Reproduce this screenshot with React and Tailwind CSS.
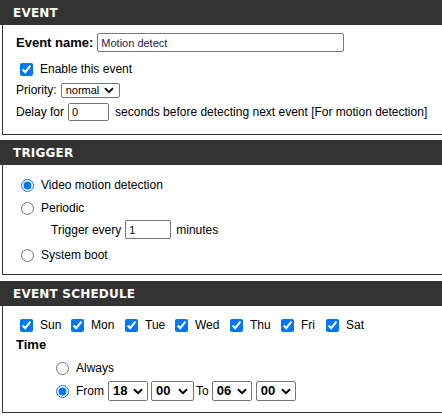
import { useState } from "react";

const Chevron = ({ bold }) => (
  <svg width="10" height="7" viewBox="0 0 10 7" className="shrink-0">
    <path
      d="M1 1.2 L5 5.2 L9 1.2"
      fill="none"
      stroke="#000"
      strokeWidth={bold ? 2 : 1.8}
    />
  </svg>
);

const FakeSelect = ({ value, className, bold }) => (
  <div
    className={`flex items-center justify-between bg-white border border-[#767676] rounded-[2px] ${className} ${
      bold ? "font-bold text-[13px]" : "text-[11px]"
    }`}
  >
    <span>{value}</span>
    <Chevron bold={bold} />
  </div>
);

const Header = ({ title }) => (
  <div className="h-[25px] bg-[#333333] flex items-center px-[13px] text-white font-['DejaVu_Sans',sans-serif] font-bold text-[12px] tracking-[0.2px]">
    {title}
  </div>
);

const Section = ({ title, children, className }) => (
  <div>
    <Header title={title} />
    <div className={`ml-[2px] border-l border-b border-[#333333] ${className}`}>
      {children}
    </div>
  </div>
);

const Radio = ({ name, checked, label }) => (
  <label className="flex items-center h-[18px]">
    <input
      type="radio"
      name={name}
      defaultChecked={checked}
      className="w-[13px] h-[13px] m-0"
    />
    <span className="ml-[7px]">{label}</span>
  </label>
);

const days = [
  { d: "Sun", w: "w-[51px]" },
  { d: "Mon", w: "w-[54px]" },
  { d: "Tue", w: "w-[50px]" },
  { d: "Wed", w: "w-[55px]" },
  { d: "Thu", w: "w-[51px]" },
  { d: "Fri", w: "w-[45px]" },
  { d: "Sat", w: "w-[40px]" },
];

export default function App() {
  const [name, setName] = useState("Motion detect");
  const [delay, setDelay] = useState("0");
  const [every, setEvery] = useState("1");

  return (
    <div className="w-[442px] h-[419px] overflow-hidden bg-white text-black text-[12px] font-['Liberation_Sans',Arial,sans-serif]">
      {/* Event */}
      <Section title="EVENT" className="pl-[13px] pt-[7px] pb-[12px] flex flex-col">
        <div className="flex items-center h-[21px]">
          <span className="font-bold text-[13px]">Event name:</span>
          <input
            value={name}
            onChange={(e) => setName(e.target.value)}
            className="ml-[4px] w-[247px] h-[19px] border border-[#767676] rounded-[2px] px-[3px] text-[11px] text-[#1a1a4a]"
          />
        </div>
        <label className="flex items-center h-[18px] mt-[7px] pl-[4px]">
          <input type="checkbox" defaultChecked className="w-[13px] h-[13px] m-0" />
          <span className="ml-[7px]">Enable this event</span>
        </label>
        <div className="flex items-center h-[20px] mt-[2px]">
          <span>Priority:</span>
          <FakeSelect value="normal" className="ml-[4px] w-[59px] h-[15px] pl-[4px] pr-[5px]" />
        </div>
        <div className="flex items-center h-[20px] mt-[2px]">
          <span>Delay for</span>
          <input
            value={delay}
            onChange={(e) => setDelay(e.target.value)}
            className="ml-[4px] w-[41px] h-[18px] border border-[#767676] rounded-[2px] px-[3px] text-[11px]"
          />
          <span className="ml-[6px]">seconds before detecting next event [For motion detection]</span>
        </div>
      </Section>

      {/* Trigger */}
      <div className="mt-[5px]">
        <Section title="TRIGGER" className="pl-[18px] pt-[11px] pb-[10px] flex flex-col">
          <Radio name="trig" checked label="Video motion detection" />
          <div className="mt-[5px]">
            <Radio name="trig" label="Periodic" />
          </div>
          <div className="flex items-center h-[19px] mt-[3px] pl-[30px]">
            <span>Trigger every</span>
            <input
              value={every}
              onChange={(e) => setEvery(e.target.value)}
              className="ml-[4px] w-[46px] h-[19px] border border-[#767676] rounded-[2px] px-[3px] text-[11px]"
            />
            <span className="ml-[5px]">minutes</span>
          </div>
          <div className="mt-[7px]">
            <Radio name="trig" label="System boot" />
          </div>
        </Section>
      </div>

      {/* Schedule */}
      <div className="mt-[6px]">
        <Section title="EVENT SCHEDULE" className="pl-[13px] pt-[10px] pb-[11px] flex flex-col">
          <div className="flex items-center h-[18px] pl-[4px]">
            {days.map((x) => (
              <label key={x.d} className={`flex items-center ${x.w}`}>
                <input type="checkbox" defaultChecked className="w-[13px] h-[13px] m-0" />
                <span className="ml-[7px]">{x.d}</span>
              </label>
            ))}
          </div>
          <div className="h-[18px] mt-[2px] flex items-center font-bold text-[13px]">Time</div>
          <div className="pl-[40px] mt-[5px] flex flex-col">
            <Radio name="time" label="Always" />
            <div className="flex items-center h-[20px] mt-[4px]">
              <input type="radio" name="time" defaultChecked className="w-[13px] h-[13px] m-0" />
              <span className="ml-[7px]">From</span>
              <FakeSelect value="18" bold className="ml-[4px] w-[40px] h-[20px] pl-[4px] pr-[4px]" />
              <FakeSelect value="00" bold className="ml-[3px] w-[43px] h-[20px] pl-[4px] pr-[5px]" />
              <span className="ml-[2px]">To</span>
              <FakeSelect value="06" bold className="ml-[3px] w-[40px] h-[20px] pl-[4px] pr-[4px]" />
              <FakeSelect value="00" bold className="ml-[4px] w-[40px] h-[20px] pl-[4px] pr-[4px]" />
            </div>
          </div>
        </Section>
      </div>
    </div>
  );
}
